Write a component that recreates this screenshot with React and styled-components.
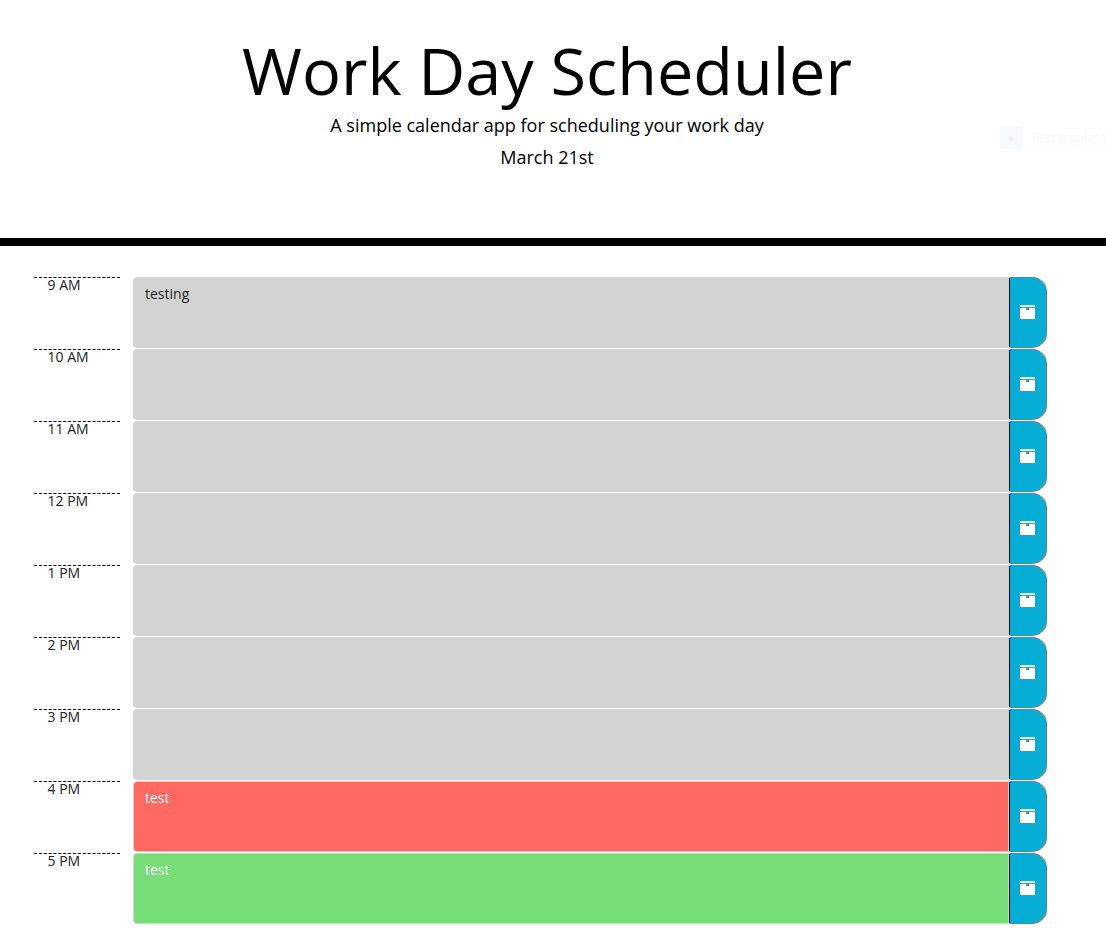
import React from "react";
import styled, { createGlobalStyle } from "styled-components";

const Global = createGlobalStyle`
  html, body { margin: 0; padding: 0; background: #fff; }
  body { font-family: "Open Sans", "Noto Sans", sans-serif; color: #000; line-height: 1.5; font-size: 16px; overflow: hidden; }
  * { box-sizing: border-box; }
`;

const Header = styled.header`
  height: 246px;
  border-bottom: 8px solid #000;
  padding: 28px 12px 0 0;
  text-align: center;
  position: relative;
`;
const Title = styled.h1`
  margin: 0;
  font-size: 64.8px;
  font-weight: 400;
  line-height: 84px;
`;
const Lead = styled.p`
  margin: 0;
  font-size: 18px;
  line-height: 27px;
`;
const DateLine = styled(Lead)`
  margin-top: 5px;
`;
const Ghost = styled.div`
  position: absolute;
  left: 1000px;
  top: 127px;
  width: 106px;
  height: 22px;
  display: flex;
  align-items: center;
  gap: 10px;
  font-size: 12px;
  color: #f8f9fb;
  background: #fefefe;
  white-space: nowrap;
  overflow: hidden;
`;
const GhostDot = styled.span`
  flex: none;
  width: 22px;
  height: 22px;
  background: #f6fafe;
  display: flex;
  align-items: center;
  justify-content: center;
  &::after {
    content: "";
    width: 5px;
    height: 5px;
    border-radius: 50%;
    background: #f6efee;
  }
`;
const Schedule = styled.main`
  padding: 31px 0 0 34px;
  display: flex;
  flex-direction: column;
`;
const Row = styled.div`
  display: flex;
  height: 72px;
`;
const Hour = styled.div`
  width: 86px;
  height: 72px;
  border-top: 1px dashed #000;
  padding-left: 13.5px;
  font-size: 14px;
  line-height: 14px;
  color: #212121;
`;
const Entry = styled.div`
  margin-left: 13px;
  width: 876px;
  height: 71px;
  padding: 7px 11px;
  font-size: 14px;
  line-height: 18px;
  border: 1px solid #ced4da;
  border-radius: 4px 0 0 4px;
  background: ${(p) => ({ past: "#d3d3d3", present: "#ff6961", future: "#77dd77" })[p.$state]};
  color: ${(p) => (p.$state === "past" ? "#212121" : "#fff")};
`;
const Save = styled.button`
  width: 38px;
  height: 71px;
  padding: 0 1px 1px 0;
  border: 1px solid #6c7f88;
  border-left: 1px solid #000;
  border-radius: 2px 15px 15px 2px;
  background: #06aed5;
  display: flex;
  align-items: center;
  justify-content: center;
`;

function ArchiveIcon() {
  return (
    <svg width="15" height="14" viewBox="0 0 15 14" aria-hidden="true">
      <rect x="0" y="0" width="15" height="2" fill="#fff" />
      <path d="M0 3h6v2h3V3h6v11H0z" fill="#fff" />
    </svg>
  );
}

const rows = [
  ["9 AM", "testing", "past"],
  ["10 AM", "", "past"],
  ["11 AM", "", "past"],
  ["12 PM", "", "past"],
  ["1 PM", "", "past"],
  ["2 PM", "", "past"],
  ["3 PM", "", "past"],
  ["4 PM", "test", "present"],
  ["5 PM", "test", "future"],
];

export default function App() {
  return (
    <>
      <Global />
      <Header>
        <Title>Work Day Scheduler</Title>
        <Lead>A simple calendar app for scheduling your work day</Lead>
        <DateLine>March 21st</DateLine>
        <Ghost>
          <GhostDot />
          Rectangular S
        </Ghost>
      </Header>
      <Schedule>
        {rows.map(([hour, text, state]) => (
          <Row key={hour}>
            <Hour>{hour}</Hour>
            <Entry $state={state}>{text}</Entry>
            <Save aria-label={`Save ${hour}`}>
              <ArchiveIcon />
            </Save>
          </Row>
        ))}
      </Schedule>
    </>
  );
}
